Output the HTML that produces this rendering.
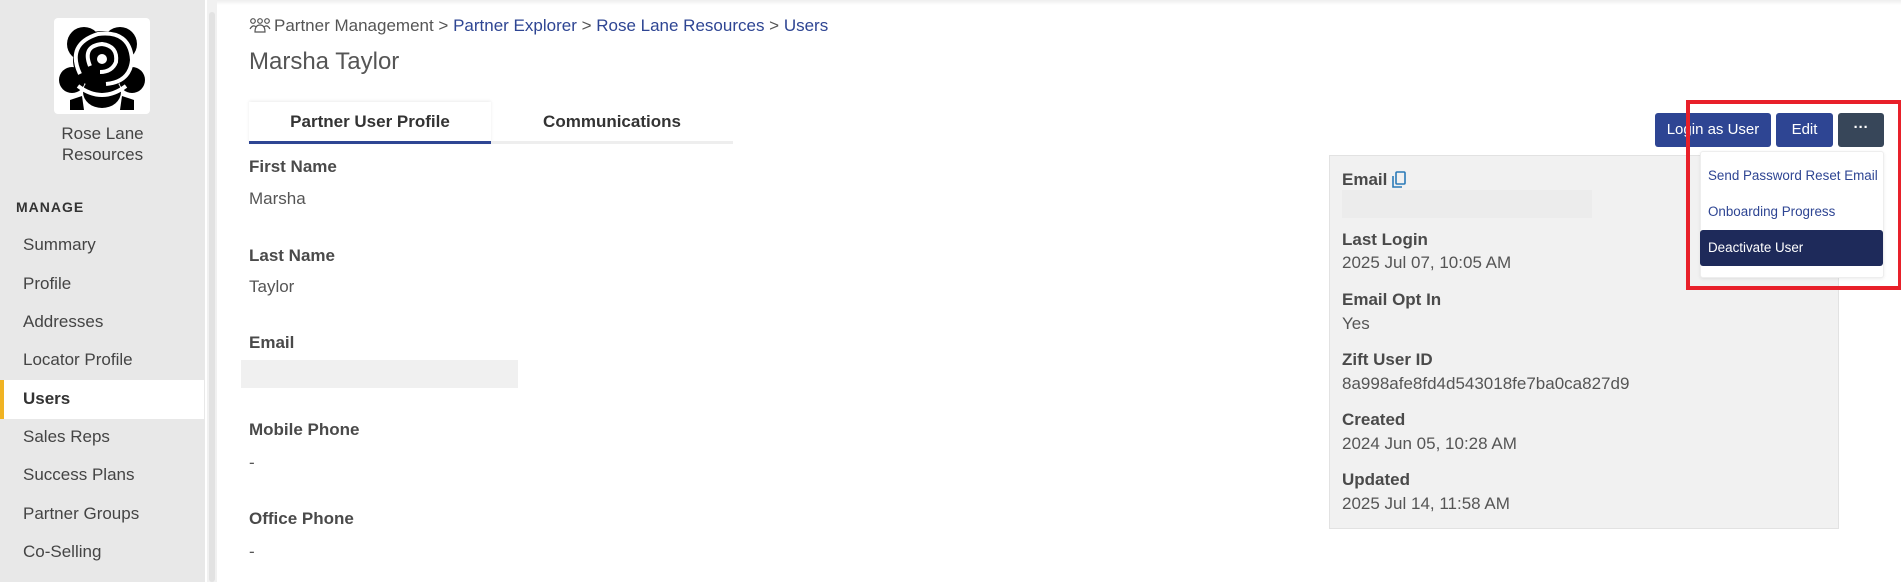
<!DOCTYPE html>
<html><head><meta charset="utf-8"><style>
*{box-sizing:border-box;margin:0;padding:0}
body{width:1901px;height:582px;overflow:hidden;background:#fff;font-family:"Liberation Sans",sans-serif;position:relative;color:#444}
.abs{position:absolute;white-space:nowrap}
#side{position:absolute;left:0;top:0;width:205px;height:582px;background:#e8e8e8}
#scroll{position:absolute;left:207px;top:0;width:10px;height:582px;background:#f1f1f1}
#scroll i{position:absolute;left:2px;top:12px;width:6px;height:570px;background:#e2e2e2;border-radius:3px}
.nav{position:absolute;left:23px;font-size:17px;color:#444}
.lbl{font-weight:bold;font-size:17px;color:#4a4a4a}
.val{font-size:17px;color:#555}
.bc{color:#2e4593}
.btn{position:absolute;top:113px;height:34px;border-radius:3px;color:#fff;font-size:15px;text-align:center;line-height:34px;background:#2e4593}
.dd{position:absolute;left:1708px;font-size:13.4px;color:#2e4593}
</style></head><body>
<div id="side"></div>
<div id="scroll"><i></i></div>
<div class="abs" style="left:54px;top:18px;width:96px;height:96px;background:#fff;border-radius:4px">
<svg width="96" height="96" viewBox="0 0 96 96">
<circle cx="30" cy="26" r="17"/><circle cx="66" cy="26" r="17"/>
<circle cx="48" cy="42" r="29"/>
<circle cx="18" cy="62" r="13"/><circle cx="78" cy="62" r="13"/>
<ellipse cx="48" cy="74" rx="19" ry="16"/>
<polygon points="16,82 28,78 30,92 16,92"/><polygon points="80,82 68,78 66,92 80,92"/>
<path d="M26 56 Q12 26 44 16 Q76 12 78 42 Q76 64 52 66" stroke="#fff" stroke-width="4" fill="none"/>
<path d="M36 48 Q28 28 48 26 Q64 28 62 44 Q58 54 46 54" stroke="#fff" stroke-width="4" fill="none"/>
<circle cx="48" cy="41" r="5" fill="#fff"/>
<path d="M24 68 Q48 86 72 68" stroke="#fff" stroke-width="4" fill="none"/>
</svg></div>
<div class="abs" style="left:0;width:205px;text-align:center;top:123px;font-size:17px;line-height:21px;color:#444;white-space:normal">Rose Lane<br>Resources</div>
<div class="abs" style="left:16px;top:199px;font-size:14px;font-weight:bold;letter-spacing:1px;color:#333">MANAGE</div>
<div class="nav" style="top:235px">Summary</div>
<div class="nav" style="top:274px">Profile</div>
<div class="nav" style="top:312px">Addresses</div>
<div class="nav" style="top:350px">Locator Profile</div>
<div class="abs" style="left:0;top:380px;width:204px;height:39px;background:#fff;border-left:4px solid #f0b323"></div>
<div class="nav" style="top:389px;font-weight:bold;color:#333">Users</div>
<div class="nav" style="top:427px">Sales Reps</div>
<div class="nav" style="top:465px">Success Plans</div>
<div class="nav" style="top:504px">Partner Groups</div>
<div class="nav" style="top:542px">Co-Selling</div>
<div class="abs" style="left:217px;top:0;width:1684px;height:5px;background:linear-gradient(#eee,#fff)"></div>

<svg class="abs" style="left:249px;top:17px" width="22" height="16" viewBox="0 0 22 16" fill="none" stroke="#555" stroke-width="1.2"><circle cx="4" cy="4" r="2.3"/><circle cx="11" cy="4" r="2.3"/><circle cx="18" cy="4" r="2.3"/><path d="M1 12 Q4 7 7 10M15 10 Q18 7 21 12M6 15 Q6 8 11 8 Q16 8 16 15Z"/></svg>
<div class="abs" style="left:274px;top:16px;font-size:17px;color:#555">Partner Management &gt; <span class="bc">Partner Explorer</span> &gt; <span class="bc">Rose Lane Resources</span> &gt; <span class="bc">Users</span></div>
<div class="abs" style="left:249px;top:48px;font-size:24px;color:#555">Marsha Taylor</div>

<div class="abs" style="left:249px;top:102px;width:242px;height:42px;box-shadow:0 -1px 3px rgba(0,0,0,.08);border-bottom:3px solid #2e4593;text-align:center;line-height:40px;font-weight:bold;font-size:17px;color:#333">Partner User Profile</div>
<div class="abs" style="left:491px;top:102px;width:242px;height:42px;border-bottom:3px solid #eee;text-align:center;line-height:40px;font-weight:bold;font-size:17px;color:#333">Communications</div>

<div class="abs lbl" style="left:249px;top:157px">First Name</div>
<div class="abs val" style="left:249px;top:189px">Marsha</div>
<div class="abs lbl" style="left:249px;top:246px">Last Name</div>
<div class="abs val" style="left:249px;top:277px">Taylor</div>
<div class="abs lbl" style="left:249px;top:333px">Email</div>
<div class="abs" style="left:241px;top:360px;width:277px;height:28px;background:#f0f0f0"></div>
<div class="abs lbl" style="left:249px;top:420px">Mobile Phone</div>
<div class="abs val" style="left:249px;top:453px">-</div>
<div class="abs lbl" style="left:249px;top:509px">Office Phone</div>
<div class="abs val" style="left:249px;top:542px">-</div>

<div class="abs" style="left:1329px;top:155px;width:510px;height:374px;background:#f1f1f1;border:1px solid #e2e2e2"></div>
<div class="abs lbl" style="left:1342px;top:170px">Email</div>
<svg class="abs" style="left:1391px;top:171px" width="16" height="18" viewBox="0 0 16 18" fill="none" stroke="#2a7ab8" stroke-width="1.6"><rect x="5" y="1" width="9" height="12" rx="1"/><path d="M2 5v11h9"/></svg>
<div class="abs" style="left:1342px;top:190px;width:250px;height:28px;background:#ececec"></div>
<div class="abs lbl" style="left:1342px;top:230px">Last Login</div>
<div class="abs val" style="left:1342px;top:253px">2025 Jul 07, 10:05 AM</div>
<div class="abs lbl" style="left:1342px;top:290px">Email Opt In</div>
<div class="abs val" style="left:1342px;top:314px">Yes</div>
<div class="abs lbl" style="left:1342px;top:350px">Zift User ID</div>
<div class="abs val" style="left:1342px;top:374px">8a998afe8fd4d543018fe7ba0ca827d9</div>
<div class="abs lbl" style="left:1342px;top:410px">Created</div>
<div class="abs val" style="left:1342px;top:434px">2024 Jun 05, 10:28 AM</div>
<div class="abs lbl" style="left:1342px;top:470px">Updated</div>
<div class="abs val" style="left:1342px;top:494px">2025 Jul 14, 11:58 AM</div>

<div class="btn" style="left:1655px;width:116px">Login as User</div>
<div class="btn" style="left:1776px;width:57px">Edit</div>
<div class="btn" style="left:1838px;width:46px;background:#374659;font-weight:bold;line-height:30px">···</div>
<div class="abs" style="left:1700px;top:151px;width:184px;height:127px;background:#fff;border:1px solid #eee;border-radius:3px;box-shadow:0 1px 3px rgba(0,0,0,.08)"></div>
<div class="dd" style="top:168px">Send Password Reset Email</div>
<div class="dd" style="top:204px">Onboarding Progress</div>
<div class="abs" style="left:1700px;top:230px;width:183px;height:36px;background:#1e2a5a;border-radius:3px"></div>
<div class="dd" style="top:240px;color:#fff">Deactivate User</div>
<div class="abs" style="left:1686px;top:100px;width:215px;height:190px;border:4px solid #e8202a;border-right-width:3px"></div>
</body></html>
